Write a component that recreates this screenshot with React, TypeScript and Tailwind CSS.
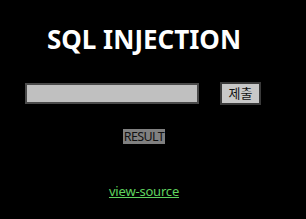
export default function App() {
  return (
    <div className="h-[219px] w-[306px] bg-black">
      <div className="flex w-[288px] flex-col items-center font-['Noto_Sans','Noto_Sans_CJK_KR',sans-serif]">
        {/* title */}
        <h1 className="mt-[21px] text-[26px] font-bold leading-[36px] text-white">SQL INJECTION</h1>

        {/* query form */}
        <div className="mt-[25px] flex items-center gap-[21px] pr-[2px]">
          <input
            type="text"
            className="h-[21px] w-[174px] border-2 border-[#4a4a4a] bg-[#c0c0c0] outline-none"
          />
          <button className="h-[23px] w-[41px] border-2 border-[#3a3a3a] bg-[#c8c8c8] text-[13px] leading-none text-[#111]">
            제출
          </button>
        </div>

        {/* result */}
        <div className="mt-[24px] bg-[#808080] px-[1px] text-[12.5px] leading-[15px] tracking-[-0.6px] text-[#111]">
          RESULT
        </div>

        {/* link */}
        <a href="#" className="mt-[38px] text-[13px] leading-[18px] tracking-[-0.2px] text-[#5fd35f] underline">
          view-source
        </a>
      </div>
    </div>
  );
}
